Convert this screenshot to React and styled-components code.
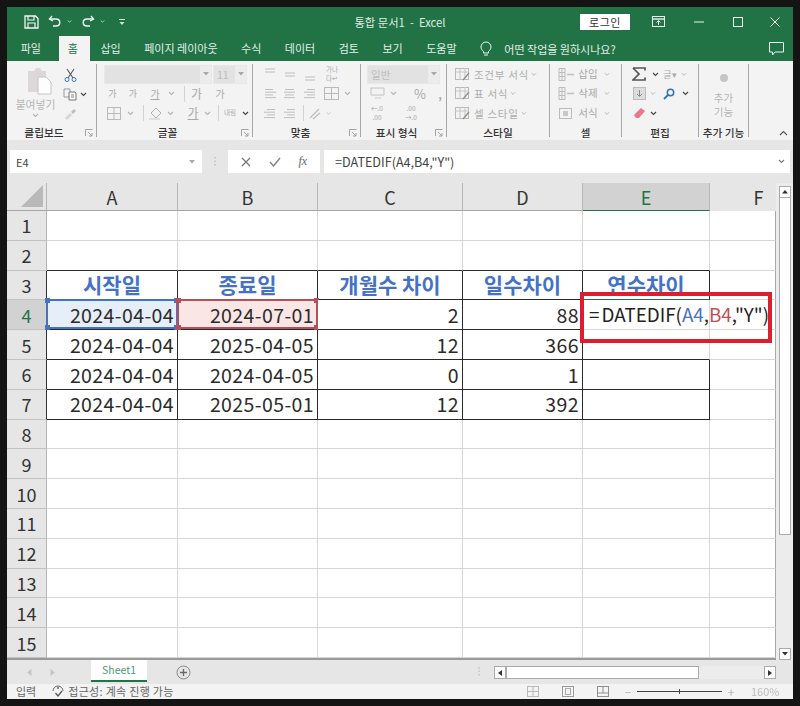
import React from 'react';
import styled, { createGlobalStyle } from 'styled-components';

const Global = createGlobalStyle`
  html, body { margin: 0; padding: 0; background: #141414; }
  body { font-family: "Noto Sans CJK KR", "Noto Sans", sans-serif; }
  * { box-sizing: border-box; }
`;

const Frame = styled.div`
  width: 800px; height: 706px; padding: 7px; background: #141414; overflow: hidden;
`;
const Window = styled.div`
  width: 786px; height: 692px; display: flex; flex-direction: column; background: #e6e6e6;
  filter: blur(0.3px);
`;

/* title bar */
const TitleBar = styled.div`
  height: 29px; background: #217346; color: #e4efe9; display: grid;
  grid-template-columns: 1fr auto 1fr; align-items: center; flex: none;
`;
const Qat = styled.div`display: flex; align-items: center; padding-left: 17px; gap: 5px;`;
const QatGroup = styled.div`display: flex; align-items: center; gap: 5px; margin-left: ${p => p.$ml || 4}px;`;
const Title = styled.div`font-size: 11.3px; line-height: 14px; white-space: pre; color: #dfeae4;`;
const TitleRight = styled.div`display: flex; align-items: center; justify-content: flex-end;`;
const Login = styled.div`
  width: 50px; height: 16px; background: #fff; color: #333; font-size: 11px; line-height: 16px;
  text-align: center; letter-spacing: 0.6px; margin-right: 7px;
`;
const WinBtn = styled.div`
  width: ${p => p.$w}px; display: flex; justify-content: center; align-items: center;
`;

/* tabs */
const Tabs = styled.div`
  height: 25px; background: #217346; display: flex; align-items: stretch; flex: none; padding-left: 2px;
`;
const Tab = styled.div`
  margin-left: ${p => p.$ml || 0}px; font-size: 11px; line-height: 25px; white-space: nowrap;
  color: ${p => (p.$active ? '#217346' : '#e3eee8')};
  background: ${p => (p.$active ? '#f3f3f3' : 'transparent')};
  width: ${p => (p.$active ? '31px' : 'auto')};
  padding: ${p => (p.$active ? '0 9px' : '0 11.75px')};
`;
const TellMe = styled.div`
  display: flex; align-items: center; gap: 12px; margin-left: 12px; font-size: 11px; color: #e3eee8; white-space: nowrap;
`;
const TabEnd = styled.div`margin-left: auto; padding-right: 9px; display: flex; align-items: center;`;

/* ribbon */
const Ribbon = styled.div`
  height: 79px; background: #f3f3f3; display: flex; flex: none; padding-top: 3px; position: relative;
`;
const Group = styled.div`
  width: ${p => p.$w}px; height: 73px; border-right: 1px solid #a8a8a8; display: flex; flex-direction: column; flex: none;
  position: relative;
`;
const GroupBody = styled.div`
  flex: 1; display: ${p => (p.$row ? 'flex' : 'block')}; padding-left: ${p => p.$pl || 0}px; min-height: 0;
`;
const GroupLabel = styled.div`
  height: 15px; line-height: 15px; font-size: 10.7px; color: #333; text-align: center; font-weight: 500;
  white-space: nowrap; margin-bottom: -3px; padding-right: ${p => p.$pr || 0}px;
`;
const Launcher = styled.svg`position: absolute; right: 3px; bottom: 0;`;
const Row = styled.div`
  height: ${p => p.$h || 20}px; display: flex; align-items: center;
`;
const Slot = styled.div`
  width: ${p => p.$w}px; flex: none; display: flex; align-items: center; justify-content: center;
  font-size: ${p => p.$fs || 10}px; color: ${p => p.$c || '#a9a9a9'}; line-height: 1; white-space: nowrap;
`;
const Under = styled(Slot)`text-decoration: underline;`;
const Stack = styled(Slot)`
  white-space: normal; text-align: center; font-size: 6.5px; line-height: 9.5px;
`;
const Sep = styled.div`width: 1px; height: 16px; background: #d2d2d2; flex: none;`;
const Combo = styled.div`
  width: ${p => p.$w}px; height: 19px; background: #e2e2e2; border: 1px solid #e8e8e8; display: flex; align-items: center;
  justify-content: space-between; flex: none; margin-right: 1px; font-size: 10.5px; color: #bdbdbd; padding-left: ${p => p.$pl || 0}px;
`;
const ComboArrow = styled.div`
  width: 11px; height: 100%; background: #ececec; display: flex; align-items: center; justify-content: center;
`;
const PasteCol = styled.div`
  width: 55px; display: flex; flex-direction: column; align-items: center; padding-left: 2px; padding-top: 3px;
  color: #b5b5b5; font-size: 10.8px; line-height: 14px; flex: none;
`;
const PasteIcon = styled.div`margin-left: 6px; margin-bottom: 2px;`;
const PasteArrow = styled.div`margin-top: 2px;`;
const SmallCol = styled.div`width: 30px; flex: none;`;
const StyleText = styled.span`font-size: 10.5px; color: #adadad; letter-spacing: .7px; margin-left: 4px;`;
const AddIn = styled.div`
  display: flex; flex-direction: column; align-items: center; width: 100%; padding-top: 9px; font-size: 10.5px; color: #b5b5b5; line-height: 14px;
`;
const AddInText = styled.div`margin-top: 8px; text-align: center;`;
const Collapse = styled.div`flex: 1; display: flex; align-items: flex-end; justify-content: flex-end; padding: 0 5px 4px 0;`;

/* formula strip */
const Strip = styled.div`
  height: 43px; flex: none; background: #e6e6e6; display: flex; align-items: flex-start; padding: 10px 3px 0 3px;
`;
const NameBox = styled.div`
  width: 192px; height: 23px; background: #fff; display: flex; align-items: center; justify-content: space-between;
  padding: 0 7px 0 6px; font-size: 11px; color: #444; flex: none;
`;
const Grip = styled.div`width: 26px; height: 23px; display: flex; align-items: center; justify-content: center; flex: none;`;
const FnBox = styled.div`
  width: 92px; height: 23px; background: #fff; display: flex; align-items: center; justify-content: space-around; padding: 0 4px; flex: none;
`;
const FxMark = styled.span`font-family: "Liberation Serif", serif; font-style: italic; font-size: 12px; color: #666;`;
const FormulaInput = styled.div`
  margin-left: 4px; flex: 1; height: 23px; background: #fff; display: flex; align-items: center; justify-content: space-between;
  padding: 0 5px 0 11px; font-size: 12.6px; color: #444; white-space: pre;
`;

/* sheet */
const SheetArea = styled.div`height: 477px; display: flex; flex: none; background: #e6e6e6;`;
const Grid = styled.div`
  position: relative; width: 769px; height: 477px; flex: none; display: grid;
  grid-template-columns: 40px 131px 140px 145px 120px 127px 66px;
  grid-template-rows: 28px repeat(15, 29.8px);
  align-content: start; background: #fff; border-bottom: 2px solid #9a9a9a; font-size: 19.5px; line-height: 1;
  font-family: "Noto Sans CJK KR", "Noto Sans", sans-serif;
`;
const Corner = styled.div`
  background: #e6e6e6; border-right: 1px solid #b6b6b6; border-bottom: 1px solid #a6a6a6; display: flex; align-items: flex-end; justify-content: flex-end; padding: 0 3px 3px 0;
`;
const ColHead = styled.div`
  background: ${p => (p.$on ? '#d2d2d2' : '#e6e6e6')};
  color: ${p => (p.$on ? '#217346' : '#333')};
  border-right: 1px solid ${p => (p.$last ? 'transparent' : '#b6b6b6')};
  border-bottom: ${p => (p.$on ? '1px solid #217346' : p.$last ? '0' : '1px solid #a6a6a6')};
  padding-left: ${p => (p.$last ? 32 : 0)}px;
  display: flex; align-items: center; justify-content: center; font-size: 18px;
`;
const RowHead = styled.div`
  background: ${p => (p.$on ? '#d2d2d2' : '#e6e6e6')};
  color: ${p => (p.$on ? '#217346' : '#333')};
  border-right: 1px solid ${p => (p.$on ? '#217346' : p.$dark ? '#333' : '#b6b6b6')};
  border-bottom: 1px solid #c2c2c2;
  display: flex; align-items: center; justify-content: center; font-size: 18px;
`;
const Cell = styled.div`
  position: relative; display: flex; align-items: center; white-space: nowrap;
  justify-content: ${p => (p.$head ? 'center' : 'flex-end')};
  padding-right: ${p => (p.$head ? 0 : 3)}px;
  letter-spacing: ${p => (p.$head ? 0 : 0.4)}px;
  font-size: ${p => (p.$head ? 21 : 19.5)}px;
  color: ${p => (p.$head ? '#4472c4' : '#2b2b2b')};
  font-weight: ${p => (p.$head ? 700 : 400)};
  background: ${p => (p.$ref === 'a' ? '#e6eefa' : p.$ref === 'b' ? '#fbe6e6' : '#fff')};
  border-right: 1px solid ${p => (p.$br ? '#2a2a2a' : p.$last ? '#a8a8a8' : '#d6d6d6')};
  border-bottom: 1px solid ${p => (p.$green ? '#217346' : p.$bb ? '#2a2a2a' : '#d6d6d6')};
`;
const RefBox = styled.div`
  position: absolute; inset: -1px -1px 0 -1px; border: 2px solid ${p => p.$c}; pointer-events: none;
`;
const Handle = styled.i`
  position: absolute; width: 5px; height: 5px; background: ${p => p.$c};
  left: ${p => (p.$x ? 'auto' : '-3px')}; right: ${p => (p.$x ? '-3px' : 'auto')};
  top: ${p => (p.$y ? 'auto' : '-3px')}; bottom: ${p => (p.$y ? '-3px' : 'auto')};
`;
const EditCell = styled.div`
  position: absolute; left: 6px; top: 0; bottom: 0; display: flex; align-items: center; color: #222; z-index: 2; font-size: 18.8px; white-space: pre; letter-spacing: 0;
`;
const Eq = styled.span`margin-right: 2px;`;
const RefA = styled.span`color: #4472c4;`;
const RefB = styled.span`color: #c0504d;`;
const Callout = styled.div`
  position: absolute; left: 573px; top: 109px; width: 192px; height: 51px; border: 4px solid #dc1f2e; z-index: 3; pointer-events: none;
`;

const VScroll = styled.div`
  width: 17px; height: 477px; flex: none; background: #ececec; display: flex; flex-direction: column; align-items: center; padding: 3px 0 0 0;
`;
const SBtn = styled.div`
  width: ${p => p.$w || 12}px; height: ${p => p.$h || 12}px; background: #fff; border: 1px solid #ababab; display: flex; align-items: center; justify-content: center; flex: none;
`;
const VThumb = styled.div`width: 12px; height: 337px; background: #fff; border: 1px solid #ababab; border-top: 0; flex: none;`;
const VFill = styled.div`flex: 1;`;

/* sheet tabs */
const TabBar = styled.div`height: 24px; flex: none; background: #e6e6e6; display: flex; align-items: stretch; padding-right: 17px;`;
const NavArrows = styled.div`width: 84px; flex: none; display: flex; align-items: center; padding-left: 20px; gap: 18px;`;
const SheetTab = styled.div`
  width: 56px; height: 22px; background: #fff; border-bottom: 2px solid #217346; color: #4f9a76; font-size: 10.5px; line-height: 20px; text-align: center; flex: none;
`;
const AddSheet = styled.div`width: 72px; display: flex; align-items: center; justify-content: center; flex: none;`;
const Dots = styled.div`margin-left: auto; width: 30px; display: flex; align-items: center; justify-content: center;`;
const HScroll = styled.div`width: 282px; height: 13px; margin-top: 6px; display: flex; background: #ececec; flex: none;`;
const HThumb = styled.div`width: 193px; background: #fff; border: 1px solid #ababab; flex: none;`;
const HFill = styled.div`flex: 1;`;

/* status */
const Status = styled.div`
  height: 15px; flex: none; background: #f3f3f3; display: flex; align-items: center; padding-left: 9px; font-size: 11px; color: #666; white-space: nowrap; line-height: 15px;
`;
const StatusGroup = styled.div`display: flex; align-items: center; margin-left: 15px; gap: 3px; letter-spacing: .3px;`;
const StatusRight = styled.div`margin-left: auto; display: flex; align-items: center; padding-right: 14px;`;
const ViewIcon = styled.div`width: 35px; display: flex; justify-content: center;`;
const Slider = styled.div`width: 85px; height: 1px; background: #444; margin: 0 3px; position: relative;`;
const SliderMark = styled.i`position: absolute; left: 42px; top: -2px; width: 1px; height: 5px; background: #444;`;
const Zoom = styled.span`font-size: 11px; color: #bdbdbd; margin-left: 14px; width: 28px;`;
const ZoomSign = styled.span`font-size: 12px; color: #b5b5b5; width: 12px; text-align: center; margin-left: ${p => p.$ml || 0}px;`;

/* icons */
const Ic = ({ w = 14, h = 14, c = 'none', children, vb }) => (
  <svg width={w} height={h} viewBox={vb || `0 0 ${w} ${h}`} fill={c} style={{ display: 'block', flex: 'none' }}>{children}</svg>
);
const Chev = ({ c = '#b5b5b5', w = 7 }) => (
  <Ic w={w} h={5} vb="0 0 7 5"><path d="M1 1 L3.5 3.5 L6 1" stroke={c} strokeWidth="1.1" /></Ic>
);
const DarkChev = () => <Chev c="#444" />;
const TriDown = () => <Ic w={6} h={4}><path d="M0 0H6L3 3.5Z" fill="#a8a8a8" /></Ic>;
const Lines = ({ a = 'c' }) => {
  const xs = a === 'l' ? [[1, 9], [1, 12], [1, 9], [1, 12]] : a === 'r' ? [[3, 11], [0, 11], [3, 11], [0, 11]] : [[1, 10], [0, 11], [1, 10], [0, 11]];
  return (
    <Ic w={12} h={11}>
      <path d={xs.map((x, i) => `M${x[0]} ${1.5 + i * 2.7}H${x[1]}`).join('')} stroke="#b9b9b9" strokeWidth=".9" />
    </Ic>
  );
};
const VLines = ({ y }) => (
  <Ic w={12} h={14}><path d={`M1 ${y}H11M1 ${y + 3}H11`} stroke="#bdbdbd" strokeWidth="1" /></Ic>
);
const Launch = () => (
  <Launcher width="8" height="8" viewBox="0 0 8 8" fill="none">
    <path d="M.5 7V.5H7.5M3 3L7 7M7 4V7H4" stroke="#9a9a9a" strokeWidth=".9" />
  </Launcher>
);
const TableIc = ({ w = 14, h = 13 }) => (
  <Ic w={w} h={h}>
    <rect x=".5" y=".5" width={w - 1} height={h - 1} stroke="#b9b9b9" />
    <path d={`M${w / 2} 0V${h}M0 ${h / 2}H${w}`} stroke="#b9b9b9" />
  </Ic>
);
const StyleIc = () => (
  <Ic w={15} h={13}>
    <rect x=".5" y=".5" width="13" height="11" stroke="#b9b9b9" />
    <path d="M0 4H14M5 0V12M10 0V12" stroke="#c5c5c5" />
    <path d="M8 12L14 5" stroke="#8f8f8f" strokeWidth="1.3" />
  </Ic>
);
const CellIc = () => (
  <Ic w={18} h={13}>
    <path d="M1 .5H7V12.5H1ZM1 4.5H7M1 8.5H7M4 0V13" stroke="#bbb" />
    <path d="M9 6.5H16" stroke="#c0c0c0" strokeWidth="1.5" />
  </Ic>
);

const colW = ['A', 'B', 'C', 'D', 'E', 'F'];
const data = {
  3: ['시작일', '종료일', '개월수 차이', '일수차이', '연수차이', ''],
  4: ['2024-04-04', '2024-07-01', '2', '88', '', ''],
  5: ['2024-04-04', '2025-04-05', '12', '366', '', ''],
  6: ['2024-04-04', '2024-04-05', '0', '1', '', ''],
  7: ['2024-04-04', '2025-05-01', '12', '392', '', ''],
};
const rows = Array.from({ length: 15 }, (_, i) => i + 1);

const darkRight = (r, c) => {
  if (r < 3 || r > 7) return false;
  if (c < 4) return true;
  if (c === 4) return r === 3 || r === 6 || r === 7;
  return false;
};
const darkBottom = (r, c) => {
  if (c > 4) return false;
  if (r === 2 || r === 3 || r === 5 || r === 6 || r === 7) return true;
  if (r === 4) return c < 4;
  return false;
};

const Handles = ({ c }) => (
  <>
    <Handle $c={c} /><Handle $c={c} $x /><Handle $c={c} $y /><Handle $c={c} $x $y />
  </>
);

export default function App() {
  return (
    <>
      <Global />
      <Frame>
        <Window>
          <TitleBar>
            <Qat>
              <Ic w={15} h={14}>
                <path d="M1 1H11.5L14 3.5V13H1Z" stroke="#f2f7f4" strokeWidth="1.3" />
                <path d="M4 1V5H10V1M4 13V8H11V13" stroke="#f2f7f4" strokeWidth="1.2" />
              </Ic>
              <QatGroup>
                <Ic w={14} h={13}>
                  <path d="M4 1L1.5 4L5 6" stroke="#f2f7f4" strokeWidth="1.4" />
                  <path d="M2 4H8C13 4 13 11 8 11H5" stroke="#f2f7f4" strokeWidth="1.4" />
                </Ic>
                <Chev c="#d5e4dc" w={5} />
              </QatGroup>
              <QatGroup>
                <Ic w={14} h={13}>
                  <path d="M10 1L12.5 4L9 6" stroke="#f2f7f4" strokeWidth="1.4" />
                  <path d="M12 4H6C1 4 1 11 6 11H9" stroke="#f2f7f4" strokeWidth="1.4" />
                </Ic>
                <Chev c="#d5e4dc" w={5} />
              </QatGroup>
              <QatGroup $ml={8}>
                <Ic w={8} h={8}><path d="M1 1.5H7" stroke="#d5e4dc" /><path d="M1.5 4H6.5L4 7Z" fill="#d5e4dc" /></Ic>
              </QatGroup>
            </Qat>
            <Title>{'통합 문서1  -  Excel'}</Title>
            <TitleRight>
              <Login>로그인</Login>
              <WinBtn $w={42}>
                <Ic w={13} h={11}>
                  <rect x=".5" y=".5" width="12" height="10" stroke="#eef5f1" />
                  <path d="M0 3H13" stroke="#eef5f1" strokeWidth="1.4" />
                  <path d="M6.5 9V5M4.5 6.5L6.5 4.5L8.5 6.5" stroke="#eef5f1" />
                </Ic>
              </WinBtn>
              <WinBtn $w={39}><Ic w={10} h={2}><path d="M0 1H10" stroke="#eef5f1" /></Ic></WinBtn>
              <WinBtn $w={39}><Ic w={10} h={10}><rect x=".5" y=".5" width="9" height="9" stroke="#eef5f1" /></Ic></WinBtn>
              <WinBtn $w={36}><Ic w={10} h={10}><path d="M.5 .5L9.5 9.5M9.5 .5L.5 9.5" stroke="#eef5f1" /></Ic></WinBtn>
            </TitleRight>
          </TitleBar>

          <Tabs>
            <Tab>파일</Tab>
            <Tab $active $ml={6}>홈</Tab>
            <Tab $ml={-1}>삽입</Tab>
            <Tab>페이지 레이아웃</Tab>
            <Tab>수식</Tab>
            <Tab>데이터</Tab>
            <Tab>검토</Tab>
            <Tab>보기</Tab>
            <Tab>도움말</Tab>
            <TellMe>
              <Ic w={12} h={16}>
                <path d="M3.5 10.5C2 9 1 7.8 1 6A5 5 0 0 1 11 6C11 7.8 10 9 8.5 10.5V12H3.5ZM4 14H8" stroke="#eef5f1" />
              </Ic>
              어떤 작업을 원하시나요?
            </TellMe>
            <TabEnd>
              <Ic w={15} h={14}><path d="M.5 .5H14.5V10H6L3.5 13V10H.5Z" stroke="#eef5f1" /></Ic>
            </TabEnd>
          </Tabs>

          <Ribbon>
            <Group $w={90}>
              <GroupBody $row>
                <PasteCol>
                  <PasteIcon>
                    <Ic w={26} h={28}>
                      <path d="M2 4H8L10 1H14L16 4H20V25H2Z" fill="#dcd7d8" />
                      <path d="M12 10H20L25 15V27H12Z" fill="#fdfdfd" stroke="#c4c4c4" />
                    </Ic>
                  </PasteIcon>
                  <div>붙여넣기</div>
                  <PasteArrow><Chev /></PasteArrow>
                </PasteCol>
                <SmallCol>
                  <Row $h={21}>
                    <Slot $w={16}>
                      <Ic w={13} h={14}>
                        <path d="M3 1L9 10M10 1L4 10" stroke="#555" strokeWidth="1.1" />
                        <circle cx="3" cy="11.5" r="2" stroke="#4472c4" />
                        <circle cx="10" cy="11.5" r="2" stroke="#4472c4" />
                      </Ic>
                    </Slot>
                  </Row>
                  <Row $h={19}>
                    <Slot $w={16}>
                      <Ic w={14} h={13}>
                        <path d="M1 1H7V9H1Z" stroke="#999" />
                        <path d="M6 4H12L13 5V12H6Z" fill="#f8f8f8" stroke="#777" />
                        <path d="M8 7H11M8 9H11" stroke="#888" />
                      </Ic>
                    </Slot>
                    <Slot $w={11}><DarkChev /></Slot>
                  </Row>
                  <Row $h={19}>
                    <Slot $w={16}>
                      <Ic w={13} h={12}>
                        <path d="M1 10L6 5L8 7L3 12Z" fill="#d5d5d5" />
                        <path d="M7 4L10 1L12 3L9 6Z" fill="#bdbdbd" />
                      </Ic>
                    </Slot>
                  </Row>
                </SmallCol>
              </GroupBody>
              <GroupLabel $pr={15}>클립보드</GroupLabel>
              <Launch />
            </Group>

            <Group $w={156}>
              <GroupBody $pl={7}>
                <Row $h={20}>
                  <Combo $w={108}>
                    <span />
                    <ComboArrow><TriDown /></ComboArrow>
                  </Combo>
                  <Combo $w={34} $pl={3}>
                    <span>11</span>
                    <ComboArrow><TriDown /></ComboArrow>
                  </Combo>
                </Row>
                <Row $h={19}>
                  <Slot $w={17} $fs={9}>가</Slot>
                  <Slot $w={24} $fs={9}>가</Slot>
                  <Under $w={20} $fs={10}>가</Under>
                  <Slot $w={12}><Chev /></Slot>
                  <Slot $w={7} />
                  <Sep />
                  <Slot $w={23} $fs={12}>가</Slot>
                  <Slot $w={24} $fs={10}>가</Slot>
                </Row>
                <Row $h={20}>
                  <Slot $w={19}><TableIc /></Slot>
                  <Slot $w={14}><Chev /></Slot>
                  <Slot $w={6} />
                  <Sep />
                  <Slot $w={22}>
                    <Ic w={15} h={14}>
                      <path d="M3 7L8 2L13 7L8 12Z" stroke="#b0b0b0" />
                      <path d="M1 13H12" stroke="#dedede" strokeWidth="2" />
                    </Ic>
                  </Slot>
                  <Slot $w={9}><Chev /></Slot>
                  <Slot $w={10} />
                  <Under $w={16} $fs={12}>가</Under>
                  <Slot $w={12}><Chev /></Slot>
                  <Slot $w={5} />
                  <Sep />
                  <Stack $w={22}>내림</Stack>
                  <Slot $w={8}><DarkChev /></Slot>
                </Row>
              </GroupBody>
              <GroupLabel $pr={14}>글꼴</GroupLabel>
              <Launch />
            </Group>

            <Group $w={108}>
              <GroupBody $pl={7}>
                <Row $h={20}>
                  <Slot $w={20}><VLines y={2} /></Slot>
                  <Slot $w={20}><VLines y={6} /></Slot>
                  <Slot $w={20}><VLines y={10} /></Slot>
                  <Stack $w={24}>가나<br />다↵</Stack>
                </Row>
                <Row $h={19}>
                  <Slot $w={20}><Lines a="l" /></Slot>
                  <Slot $w={20}><Lines /></Slot>
                  <Slot $w={20}><Lines a="r" /></Slot>
                  <Slot $w={22}><TableIc w={15} h={13} /></Slot>
                  <Slot $w={11}><Chev /></Slot>
                </Row>
                <Row $h={20}>
                  <Slot $w={20}><Lines a="r" /></Slot>
                  <Slot $w={20}><Lines a="r" /></Slot>
                  <Slot $w={3} />
                  <Sep />
                  <Slot $w={22}>
                    <Ic w={14} h={13}><path d="M2 11L11 2M5 12L12 6" stroke="#bbb" strokeWidth="1.2" /></Ic>
                  </Slot>
                  <Slot $w={5}><Chev w={5} /></Slot>
                </Row>
              </GroupBody>
              <GroupLabel $pr={12}>맞춤</GroupLabel>
              <Launch />
            </Group>

            <Group $w={86}>
              <GroupBody $pl={6}>
                <Row $h={20}>
                  <Combo $w={73} $pl={3}>
                    <span>일반</span>
                    <ComboArrow><TriDown /></ComboArrow>
                  </Combo>
                </Row>
                <Row $h={19}>
                  <Slot $w={20}>
                    <Ic w={15} h={13}><path d="M1 1H14V8H1Z" stroke="#c2c2c2" /><path d="M5 11H11" stroke="#ccc" /></Ic>
                  </Slot>
                  <Slot $w={12}><Chev /></Slot>
                  <Slot $w={14} />
                  <Slot $w={14} $fs={13}>%</Slot>
                  <Slot $w={8} />
                  <Slot $w={10} $fs={13} $c="#999">,</Slot>
                </Row>
                <Row $h={20}>
                  <Stack $w={20}>←.0<br />.00</Stack>
                  <Slot $w={14} />
                  <Stack $w={20}>.00<br />→.0</Stack>
                </Row>
              </GroupBody>
              <GroupLabel $pr={14}>표시 형식</GroupLabel>
              <Launch />
            </Group>

            <Group $w={103}>
              <GroupBody $pl={8}>
                <Row $h={20}><StyleIc /><StyleText>조건부 서식</StyleText><Slot $w={10}><Chev w={6} /></Slot></Row>
                <Row $h={19}><StyleIc /><StyleText>표 서식</StyleText><Slot $w={10}><Chev w={6} /></Slot></Row>
                <Row $h={20}><StyleIc /><StyleText>셀 스타일</StyleText><Slot $w={10}><Chev w={6} /></Slot></Row>
              </GroupBody>
              <GroupLabel>스타일</GroupLabel>
            </Group>

            <Group $w={72}>
              <GroupBody $pl={8}>
                <Row $h={20}><CellIc /><Slot $w={24} $fs={10.5}>삽입</Slot><Slot $w={14}><Chev w={6} /></Slot></Row>
                <Row $h={19}><CellIc /><Slot $w={24} $fs={10.5}>삭제</Slot><Slot $w={14}><Chev w={6} /></Slot></Row>
                <Row $h={20}>
                  <Ic w={18} h={13}>
                    <rect x="1.5" y="1.5" width="12" height="10" stroke="#bbb" />
                    <rect x="5" y="4" width="5" height="5" fill="#c8c8c8" />
                  </Ic>
                  <Slot $w={24} $fs={10.5}>서식</Slot><Slot $w={14}><Chev w={6} /></Slot>
                </Row>
              </GroupBody>
              <GroupLabel>셀</GroupLabel>
            </Group>

            <Group $w={77}>
              <GroupBody $pl={8}>
                <Row $h={20}>
                  <Slot $w={18}>
                    <Ic w={14} h={14}><path d="M1 1H13V3.5M1 1L7 7L1 13H13V10.5" stroke="#555" strokeWidth="1.7" /></Ic>
                  </Slot>
                  <Slot $w={14}><DarkChev /></Slot>
                  <Slot $w={16} $fs={9}>글▾</Slot>
                  <Slot $w={12}><Chev w={6} /></Slot>
                </Row>
                <Row $h={19}>
                  <Slot $w={18}>
                    <Ic w={13} h={13}>
                      <rect x=".5" y=".5" width="12" height="12" fill="#ddd" stroke="#bbb" />
                      <path d="M6.5 3V9M4 7L6.5 9.5L9 7" stroke="#8b8b8b" />
                    </Ic>
                  </Slot>
                  <Slot $w={10}><Chev w={6} /></Slot>
                  <Slot $w={22}>
                    <Ic w={12} h={12}>
                      <circle cx="7.5" cy="4.5" r="3.2" stroke="#2f75b5" strokeWidth="1.5" />
                      <path d="M5 7L1 11" stroke="#2f75b5" strokeWidth="1.8" />
                    </Ic>
                  </Slot>
                  <Slot $w={10}><DarkChev /></Slot>
                </Row>
                <Row $h={20}>
                  <Slot $w={18}>
                    <Ic w={13} h={12}><path d="M1 8L8 1L12 4L6 11H3Z" fill="#e8788c" /></Ic>
                  </Slot>
                  <Slot $w={10}><DarkChev /></Slot>
                </Row>
              </GroupBody>
              <GroupLabel>편집</GroupLabel>
            </Group>

            <Group $w={50}>
              <GroupBody>
                <AddIn>
                  <Ic w={10} h={10}><circle cx="5" cy="5" r="4" fill="#c5c5c5" /></Ic>
                  <AddInText>추가<br />기능</AddInText>
                </AddIn>
              </GroupBody>
              <GroupLabel>추가 기능</GroupLabel>
            </Group>

            <Collapse>
              <Ic w={9} h={6}><path d="M1 5L4.5 1.5L8 5" stroke="#555" strokeWidth="1.1" /></Ic>
            </Collapse>
          </Ribbon>

          <Strip>
            <NameBox>E4<TriDown /></NameBox>
            <Grip>
              <Ic w={2} h={10}><path d="M1 0V10" stroke="#aaa" strokeDasharray="1.5 2" /></Ic>
            </Grip>
            <FnBox>
              <Ic w={10} h={10}><path d="M1 1L9 9M9 1L1 9" stroke="#777" strokeWidth="1.3" /></Ic>
              <Ic w={12} h={10}><path d="M1 5L4.5 9L11 1" stroke="#888" strokeWidth="1.5" /></Ic>
              <FxMark>fx</FxMark>
            </FnBox>
            <FormulaInput>
              {'=DATEDIF(A4,B4,"Y")'}
              <Chev c="#777" />
            </FormulaInput>
          </Strip>

          <SheetArea>
            <Grid>
              <Corner>
                <Ic w={22} h={22}><path d="M22 0V22H0Z" fill="#b9b9b9" /></Ic>
              </Corner>
              {colW.map(c => (
                <ColHead key={c} $on={c === 'E'} $last={c === 'F'}>{c}</ColHead>
              ))}
              {rows.map(r => (
                <React.Fragment key={r}>
                  <RowHead $on={r === 4} $dark={r >= 3 && r <= 7}>{r}</RowHead>
                  {colW.map((c, i) => {
                    const v = data[r] ? data[r][i] : '';
                    const ref = r === 4 && i === 0 ? 'a' : r === 4 && i === 1 ? 'b' : undefined;
                    return (
                      <Cell key={c} $head={r === 3} $br={darkRight(r, i)} $bb={darkBottom(r, i)} $green={r === 3 && i === 4} $last={i === 5} $ref={ref}>
                        {v}
                        {ref === 'a' && <RefBox $c="#4472c4"><Handles c="#4472c4" /></RefBox>}
                        {ref === 'b' && <RefBox $c="#b5505a"><Handles c="#b5505a" /></RefBox>}
                        {r === 4 && i === 4 && (
                          <EditCell>
                            <Eq>=</Eq>DATEDIF(<RefA>A4</RefA>,<RefB>B4</RefB>,"Y")
                          </EditCell>
                        )}
                      </Cell>
                    );
                  })}
                </React.Fragment>
              ))}
              <Callout />
            </Grid>
            <VScroll>
              <SBtn><Ic w={6} h={4}><path d="M3 0L6 3.5H0Z" fill="#333" /></Ic></SBtn>
              <VThumb />
              <VFill />
              <SBtn><Ic w={6} h={4}><path d="M0 0H6L3 3.5Z" fill="#333" /></Ic></SBtn>
            </VScroll>
          </SheetArea>

          <TabBar>
            <NavArrows>
              <Ic w={5} h={7}><path d="M4.5 0V7L0 3.5Z" fill="#c5c5c5" /></Ic>
              <Ic w={5} h={7}><path d="M.5 0V7L5 3.5Z" fill="#c5c5c5" /></Ic>
            </NavArrows>
            <SheetTab>Sheet1</SheetTab>
            <AddSheet>
              <Ic w={15} h={15}>
                <circle cx="7.5" cy="7.5" r="6.5" stroke="#8a8a8a" />
                <path d="M7.5 4V11M4 7.5H11" stroke="#666" strokeWidth="1.3" />
              </Ic>
            </AddSheet>
            <Dots><Ic w={2} h={10}><path d="M1 0V10" stroke="#b0b0b0" strokeDasharray="1.5 2" /></Ic></Dots>
            <HScroll>
              <SBtn $h={13}><Ic w={4} h={6}><path d="M4 0V6L0 3Z" fill="#333" /></Ic></SBtn>
              <HThumb />
              <HFill />
              <SBtn $h={13}><Ic w={4} h={6}><path d="M0 0V6L4 3Z" fill="#333" /></Ic></SBtn>
            </HScroll>
          </TabBar>

          <Status>
            입력
            <StatusGroup>
              <Ic w={14} h={13}>
                <path d="M2 6A5 5 0 0 1 12 6" stroke="#666" />
                <circle cx="7" cy="3" r="1" fill="#666" />
                <path d="M4.5 8L7 11L11 6" stroke="#555" strokeWidth="1.3" />
              </Ic>
              접근성: 계속 진행 가능
            </StatusGroup>
            <StatusRight>
              <ViewIcon><TableIc w={12} h={11} /></ViewIcon>
              <ViewIcon>
                <Ic w={12} h={11}><rect x=".5" y=".5" width="11" height="10" stroke="#9a9a9a" /><rect x="3.5" y="2.5" width="5" height="6" stroke="#aaa" /></Ic>
              </ViewIcon>
              <ViewIcon>
                <Ic w={12} h={11}><rect x=".5" y=".5" width="11" height="10" stroke="#8f8f8f" /><path d="M.5 7H11.5M6 .5V7" stroke="#8f8f8f" /></Ic>
              </ViewIcon>
              <ZoomSign $ml={2}>−</ZoomSign>
              <Slider><SliderMark /></Slider>
              <ZoomSign>+</ZoomSign>
              <Zoom>160%</Zoom>
            </StatusRight>
          </Status>
        </Window>
      </Frame>
    </>
  );
}
